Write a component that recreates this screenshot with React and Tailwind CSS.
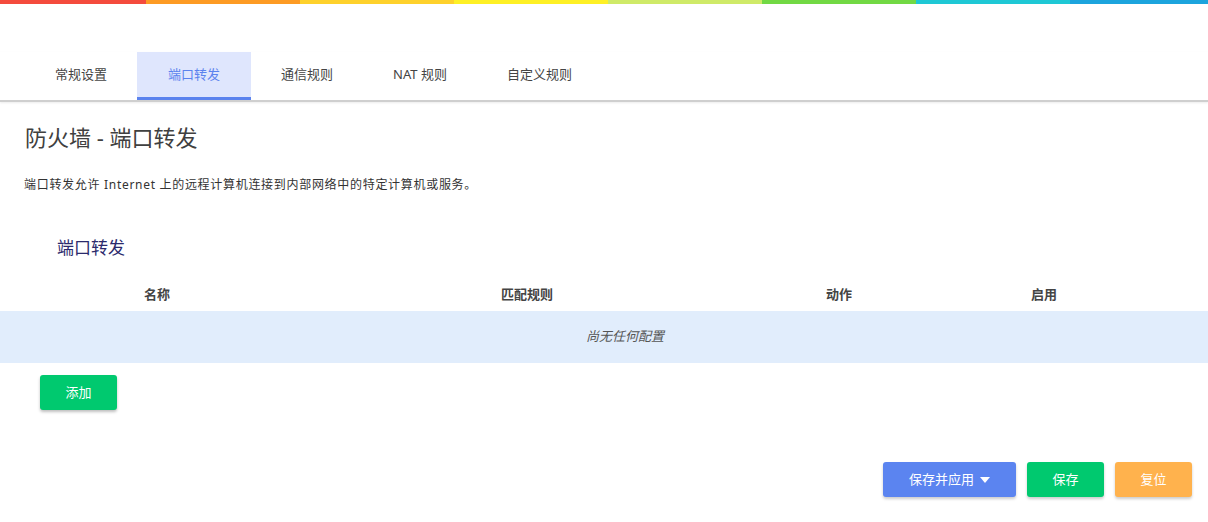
import React from "react";

const stripe = [
  ["#f44b3d", "w-[146px]"],
  ["#fd9b24", "w-[154px]"],
  ["#fed12c", "w-[154px]"],
  ["#fef025", "w-[154px]"],
  ["#cfea68", "w-[154px]"],
  ["#72d944", "w-[154px]"],
  ["#1ec8d5", "w-[154px]"],
  ["#1ca4dd", "flex-1"],
];

export default function App() {
  const font = { fontFamily: '"Noto Sans", "Noto Sans CJK SC", sans-serif' };
  return (
    <div className="w-[1208px] h-[522px] bg-white text-[#333] overflow-hidden" style={font}>
      <div className="flex h-[4px]">
        {stripe.map(([c, w]) => (
          <div key={c} className={w} style={{ background: c }} />
        ))}
      </div>
      <div className="pt-[48px]">
        <div className="flex pl-[25px] border-b-2 border-[#cfcfcf] shadow-[0_1px_2px_rgba(0,0,0,0.08)]">
          {["常规设置", "端口转发", "通信规则", "NAT 规则", "自定义规则"].map((t, i) => (
            <div
              key={t}
              className={
                "h-[48px] px-[30px] flex items-center text-[13px] border-b-[3px] " +
                (i === 1 ? "bg-[#dfe6fd] text-[#5b83ee] border-[#5b83ee] px-[31px]" : "text-[#444] border-transparent")
              }
            >
              {t}
            </div>
          ))}
        </div>
      </div>
      <h2 className="text-[22px] leading-[30px] text-[#404040] ml-[25px] mt-[20px]">防火墙 - 端口转发</h2>
      <p className="text-[12px] leading-[16px] tracking-[0.7px] text-[#333] ml-[24px] mt-[25px]">
        端口转发允许 Internet 上的远程计算机连接到内部网络中的特定计算机或服务。
      </p>
      <h3 className="text-[17px] leading-[24px] text-[#2b2a6c] ml-[57px] mt-[43px]">端口转发</h3>
      <div className="mt-[19px]">
        <div className="flex h-[32px] items-center text-[13px] font-bold text-[#444]">
          <div className="w-[314px] text-center">名称</div>
          <div className="w-[426px] text-center">匹配规则</div>
          <div className="w-[198px] text-center">动作</div>
          <div className="w-[212px] text-center">启用</div>
          <div className="flex-1" />
        </div>
        <div className="h-[52px] bg-[#e1edfc] flex items-center justify-center pl-[42px] text-[13px] italic text-[#555]">
          尚无任何配置
        </div>
      </div>
      <div className="ml-[40px] mt-[12px]">
        <button className="w-[77px] h-[35px] rounded-[3px] bg-[#00c96f] text-white text-[13px] shadow-[0_2px_3px_rgba(0,0,0,0.25)]">
          添加
        </button>
      </div>
      <div className="flex justify-end gap-[11px] pr-[16px] mt-[52px]">
        <button className="w-[133px] h-[35px] rounded-[3px] bg-[#5b84f0] text-white text-[13px] shadow-[0_2px_3px_rgba(0,0,0,0.2)] flex items-center justify-center gap-[6px]">
          保存并应用
          <svg width="10" height="6" viewBox="0 0 10 6"><path d="M0 0 L10 0 L5 6 Z" fill="white" /></svg>
        </button>
        <button className="w-[77px] h-[35px] rounded-[3px] bg-[#00c96f] text-white text-[13px] shadow-[0_2px_3px_rgba(0,0,0,0.2)]">
          保存
        </button>
        <button className="w-[77px] h-[35px] rounded-[3px] bg-[#ffb24d] text-white text-[13px] shadow-[0_2px_3px_rgba(0,0,0,0.2)]">
          复位
        </button>
      </div>
    </div>
  );
}
